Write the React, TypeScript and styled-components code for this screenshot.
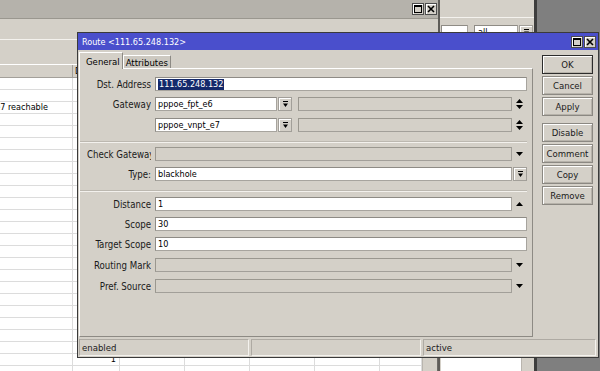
import React from "react";
import styled, { createGlobalStyle } from "styled-components";

const FONT = `"DejaVu Sans Condensed", "DejaVu Sans", sans-serif`;
const FACE = "#d4d0c8";

const GlobalStyle = createGlobalStyle`
  html, body { margin: 0; padding: 0; }
  body {
    background: #7f7f7f;
    font-family: ${FONT};
    font-stretch: condensed;
    font-size: 9px;
    color: #000;
  }
  #root { width: 600px; height: 371px; }
`;

const Desktop = styled.div`
  position: relative;
  width: 600px;
  height: 371px;
  overflow: hidden;
  background: #7f7f7f;
`;

/* ---------- background window ---------- */
const BgWindow = styled.div`
  position: absolute;
  left: 0;
  top: 0;
  width: 440px;
  height: 371px;
  box-sizing: border-box;
  border-right: 2px solid #5e5c58;
  background: ${FACE};
  display: flex;
  flex-direction: column;
`;

const BgTitleBar = styled.div`
  height: 19px;
  flex: none;
  box-sizing: border-box;
  background: #b5b2ab;
  border-bottom: 1px solid #9a978f;
  display: flex;
  justify-content: flex-end;
  align-items: center;
  gap: 1px;
  padding-right: 1px;
`;

const WinButton = styled.div`
  width: 12px;
  height: 12px;
  box-sizing: border-box;
  border: 1px solid #4d4d4d;
  background: ${FACE};
  box-shadow: inset 1px 1px 0 #fff;
  display: flex;
  align-items: center;
  justify-content: center;
`;

const ToolStrip = styled.div<{ $h: number; $line?: boolean }>`
  height: ${(p) => p.$h}px;
  flex: none;
  box-sizing: border-box;
  border-bottom: ${(p) => (p.$line ? "1px solid #f4f2ee" : "none")};
`;

const TableArea = styled.div`
  flex: 1;
  display: flex;
  min-height: 0;
`;

const Grid = styled.div`
  width: 422px;
  display: flex;
  flex-direction: column;
  overflow: hidden;
  background: #fff;
`;

const HeaderRow = styled.div`
  height: 14px;
  flex: none;
  box-sizing: border-box;
  display: flex;
  background: ${FACE};
  border-top: 1px solid #fff;
  border-bottom: 1px solid #a3a09a;
`;

const HeaderCell = styled.div<{ $w: number }>`
  width: ${(p) => p.$w}px;
  flex: none;
  box-sizing: border-box;
  border-right: 1px solid #a3a09a;
  padding-left: 2px;
  white-space: nowrap;
  overflow: hidden;
  line-height: 12px;
`;

const DataRow = styled.div`
  height: 12px;
  flex: none;
  box-sizing: border-box;
  display: flex;
  border-bottom: 1px solid #dcdcdc;
`;

const DataCell = styled.div<{ $w: number; $align?: "left" | "right" }>`
  width: ${(p) => p.$w}px;
  flex: none;
  box-sizing: border-box;
  border-right: 1px solid #dcdcdc;
  display: flex;
  align-items: center;
  justify-content: ${(p) => (p.$align === "right" ? "flex-end" : "flex-start")};
  padding: 0 3px 0 2px;
  white-space: nowrap;
  overflow: hidden;
  line-height: 11px;
`;

const FirstCell = styled(DataCell)`
  justify-content: flex-end;
  padding-right: 24px;
`;

const VScroll = styled.div`
  width: 16px;
  flex: none;
  box-sizing: border-box;
  background: ${FACE};
  border-left: 1px solid #b9b5ae;
  border-right: 1px solid #6c6a66;
`;

/* ---------- side window ---------- */
const SideWindow = styled.div`
  position: absolute;
  left: 440px;
  top: 0;
  width: 97px;
  height: 371px;
  box-sizing: border-box;
  border-right: 3px solid #3d3d3d;
  background: ${FACE};
  display: flex;
  flex-direction: column;
`;

const FilterBar = styled.div`
  display: flex;
  align-items: flex-start;
  padding: 7px 0 0 1px;
  height: 60px;
  flex: none;
  box-sizing: border-box;
  border-top: 1px solid #f4f2ee;
  margin-top: 17px;
  gap: 6px;
`;

const SmallInput = styled.div<{ $w: number }>`
  width: ${(p) => p.$w}px;
  height: 14px;
  box-sizing: border-box;
  background: #fff;
  border: 1px solid #a7a49e;
  border-top-color: #8e8b85;
  border-left-color: #8e8b85;
  padding-left: 3px;
  line-height: 12px;
  white-space: nowrap;
  overflow: hidden;
`;

const FilterCombo = styled.div`
  display: flex;
  gap: 1px;
`;

const SideList = styled.div`
  flex: 1;
  display: flex;
  margin-left: 1px;
`;

const SideListBody = styled.div`
  flex: 1;
  background: #fff;
`;

const SideScroll = styled.div`
  width: 13px;
  flex: none;
  background: ${FACE};
  box-sizing: border-box;
  border-left: 1px solid #b9b5ae;
`;

/* ---------- dialog ---------- */
const Dialog = styled.div`
  position: absolute;
  left: 77px;
  top: 32px;
  width: 522px;
  height: 326px;
  box-sizing: border-box;
  border: 1px solid #3a3a3a;
  background: ${FACE};
  display: flex;
  flex-direction: column;
`;

const DialogTitle = styled.div`
  height: 17px;
  flex: none;
  background: #4a4fcc;
  color: #fff;
  display: flex;
  align-items: center;
  justify-content: space-between;
  padding: 0 2px 0 4px;
  white-space: nowrap;
`;

const TitleButtons = styled.div`
  display: flex;
  gap: 1px;
`;

const DialogBody = styled.div`
  flex: 1;
  display: flex;
  align-items: flex-start;
  padding: 1px 5px 0 1px;
  gap: 9px;
  min-height: 0;
`;

const Main = styled.div`
  width: 454px;
  flex: none;
  display: flex;
  flex-direction: column;
`;

const Tabs = styled.div`
  height: 17px;
  display: flex;
  align-items: flex-end;
`;

const Tab = styled.div<{ $active?: boolean }>`
  height: ${(p) => (p.$active ? 17 : 13)}px;
  box-sizing: border-box;
  padding: ${(p) => (p.$active ? "0 2px 0 6px" : "0 2px 0 2px")};
  border-top: 1px solid #fff;
  border-left: 1px solid #fff;
  border-right: 1px solid #8d8a84;
  background: ${(p) => (p.$active ? FACE : "#cdc9c1")};
  display: flex;
  align-items: center;
  white-space: nowrap;
  font-size: 9.5px;
  position: relative;
  z-index: ${(p) => (p.$active ? 1 : 0)};
  margin-bottom: ${(p) => (p.$active ? -1 : 0)}px;
`;

const Panel = styled.div`
  height: 269px;
  box-sizing: border-box;
  border-top: 1px solid #fff;
  border-left: 1px solid #fff;
  border-right: 1px solid #8d8a84;
  border-bottom: 1px solid #8d8a84;
  padding-top: 8px;
  display: flex;
  flex-direction: column;
`;

const Row = styled.div<{ $mb?: number }>`
  height: 14px;
  flex: none;
  display: flex;
  align-items: center;
  padding: 0 5px 0 7px;
  margin-bottom: ${(p) => p.$mb ?? 6}px;
`;

const Label = styled.div`
  width: 64px;
  flex: none;
  margin-right: 4px;
  text-align: right;
  white-space: nowrap;
  overflow: hidden;
  font-size: 9.6px;
  color: #1a1a1a;
`;

const Field = styled.div<{ $disabled?: boolean; $w?: number }>`
  ${(p) => (p.$w ? `width: ${p.$w}px; flex: none;` : "flex: 1;")}
  height: 14px;
  box-sizing: border-box;
  background: ${(p) => (p.$disabled ? FACE : "#fff")};
  border: 1px solid ${(p) => (p.$disabled ? "#a29f99" : "#a7a49e")};
  border-top-color: ${(p) => (p.$disabled ? "#9a978f" : "#8e8b85")};
  border-left-color: ${(p) => (p.$disabled ? "#9a978f" : "#8e8b85")};
  padding-left: 2px;
  display: flex;
  align-items: center;
  white-space: nowrap;
  overflow: hidden;
`;

const Selected = styled.span`
  background: #14296b;
  color: #fff;
  padding: 0 1px;
  line-height: 11px;
`;

const IconSlot = styled.div<{ $end?: boolean }>`
  width: 15px;
  flex: none;
  height: 14px;
  display: flex;
  align-items: center;
  justify-content: ${(p) => (p.$end ? "flex-end" : "center")};
`;

const DropButton = styled.div<{ $ml?: number; $mr?: number }>`
  width: 14px;
  height: 14px;
  flex: none;
  box-sizing: border-box;
  margin-left: ${(p) => p.$ml ?? 0}px;
  margin-right: ${(p) => p.$mr ?? 0}px;
  border: 1px solid #a29f99;
  background: ${FACE};
  box-shadow: inset 1px 1px 0 #fff;
  display: flex;
  align-items: center;
  justify-content: center;
`;

const Separator = styled.div<{ $mb: number }>`
  height: 0;
  flex: none;
  border-top: 1px solid #bcb8b0;
  border-bottom: 1px solid #f3f1ed;
  margin: 3px 5px ${(p) => p.$mb}px 0;
`;

const ButtonCol = styled.div`
  width: 51px;
  flex: none;
  display: flex;
  flex-direction: column;
  gap: 2px;
  padding-top: 4px;
`;

const Btn = styled.div<{ $default?: boolean; $mt?: number }>`
  height: 19px;
  box-sizing: border-box;
  margin-top: ${(p) => p.$mt ?? 0}px;
  border: 1px solid ${(p) => (p.$default ? "#2c2c2c" : "#8b8882")};
  background: ${FACE};
  box-shadow: inset 1px 1px 0 #fff, inset -1px -1px 0 #b6b2aa;
  display: flex;
  align-items: center;
  justify-content: center;
  color: #1a1a1a;
  font-size: 9.5px;
  white-space: nowrap;
`;

const StatusBar = styled.div`
  height: 17px;
  flex: none;
  display: flex;
  gap: 2px;
  margin: 2px 2px 1px 1px;
`;

const StatusSeg = styled.div<{ $w?: number }>`
  ${(p) => (p.$w ? `width: ${p.$w}px; flex: none;` : "flex: 1;")}
  box-sizing: border-box;
  border: 1px solid;
  border-color: #aeaaa3 #f4f2ee #f4f2ee #aeaaa3;
  padding-left: 2px;
  display: flex;
  align-items: center;
  white-space: nowrap;
  font-size: 9.5px;
  color: #1a1a1a;
`;

/* ---------- glyphs ---------- */
const MaxGlyph = () => (
  <svg width="8" height="8" viewBox="0 0 8 8">
    <rect x="0.5" y="0.5" width="7" height="7" fill="none" stroke="#000" />
    <rect x="0" y="0" width="8" height="2" fill="#000" />
  </svg>
);

const CloseGlyph = () => (
  <svg width="8" height="8" viewBox="0 0 8 8">
    <path d="M1 1L7 7M7 1L1 7" stroke="#000" strokeWidth="1.6" />
  </svg>
);

const DropGlyph = () => (
  <svg width="7" height="7" viewBox="0 0 7 7">
    <rect x="1" y="0" width="5" height="1" fill="#000" />
    <path d="M1 2.5H6L3.5 6Z" fill="#000" />
  </svg>
);

const UpDownGlyph = () => (
  <svg width="7" height="10" viewBox="0 0 7 10">
    <path d="M0 4H7L3.5 0Z" fill="#000" />
    <path d="M0 6H7L3.5 10Z" fill="#000" />
  </svg>
);

const DownGlyph = () => (
  <svg width="7" height="4" viewBox="0 0 7 4">
    <path d="M0 0H7L3.5 4Z" fill="#000" />
  </svg>
);

const UpGlyph = () => (
  <svg width="7" height="4" viewBox="0 0 7 4">
    <path d="M0 4H7L3.5 0Z" fill="#000" />
  </svg>
);

const COLS = [73, 47, 65, 65, 65, 65, 42];
const ROW_COUNT = 25;

function BackgroundTable() {
  return (
    <TableArea>
      <Grid>
        <HeaderRow>
          {COLS.map((w, i) => (
            <HeaderCell key={i} $w={w}>
              {i === 1 ? "Dst. Address" : ""}
            </HeaderCell>
          ))}
        </HeaderRow>
        {Array.from({ length: ROW_COUNT }).map((_, r) => (
          <DataRow key={r}>
            {COLS.map((w, i) => {
              if (i === 0) {
                return (
                  <FirstCell key={i} $w={w}>
                    {r === 2 ? "pppoe_vnpt_e7 reachable" : ""}
                  </FirstCell>
                );
              }
              return (
                <DataCell key={i} $w={w} $align={i === 1 ? "right" : "left"}>
                  {r === 23 && i === 1 ? "1" : ""}
                </DataCell>
              );
            })}
          </DataRow>
        ))}
      </Grid>
      <VScroll />
    </TableArea>
  );
}

export default function App() {
  return (
    <>
      <GlobalStyle />
      <Desktop>
        <BgWindow>
          <BgTitleBar>
            <WinButton>
              <MaxGlyph />
            </WinButton>
            <WinButton>
              <CloseGlyph />
            </WinButton>
          </BgTitleBar>
          <ToolStrip $h={21} $line />
          <ToolStrip $h={24} />
          <BackgroundTable />
        </BgWindow>

        <SideWindow>
          <FilterBar>
            <SmallInput $w={27} />
            <FilterCombo>
              <SmallInput $w={44}>all</SmallInput>
              <DropButton>
                <DropGlyph />
              </DropButton>
            </FilterCombo>
          </FilterBar>
          <SideList>
            <SideListBody />
            <SideScroll />
          </SideList>
        </SideWindow>

        <Dialog>
          <DialogTitle>
            <span>Route &lt;111.65.248.132&gt;</span>
            <TitleButtons>
              <WinButton>
                <MaxGlyph />
              </WinButton>
              <WinButton>
                <CloseGlyph />
              </WinButton>
            </TitleButtons>
          </DialogTitle>

          <DialogBody>
            <Main>
              <Tabs>
                <Tab $active>General</Tab>
                <Tab>Attributes</Tab>
              </Tabs>
              <Panel>
                <Row>
                  <Label>Dst. Address</Label>
                  <Field>
                    <Selected>111.65.248.132</Selected>
                  </Field>
                </Row>
                <Row $mb={7}>
                  <Label>Gateway</Label>
                  <Field $w={122}>pppoe_fpt_e6</Field>
                  <DropButton $ml={1} $mr={6}>
                    <DropGlyph />
                  </DropButton>
                  <Field $disabled />
                  <IconSlot>
                    <UpDownGlyph />
                  </IconSlot>
                </Row>
                <Row>
                  <Label />
                  <Field $w={122}>pppoe_vnpt_e7</Field>
                  <DropButton $ml={1} $mr={6}>
                    <DropGlyph />
                  </DropButton>
                  <Field $disabled />
                  <IconSlot>
                    <UpDownGlyph />
                  </IconSlot>
                </Row>
                <Separator $mb={4} />
                <Row>
                  <Label>Check Gateway</Label>
                  <Field $disabled />
                  <IconSlot>
                    <DownGlyph />
                  </IconSlot>
                </Row>
                <Row>
                  <Label>Type:</Label>
                  <Field>blackhole</Field>
                  <IconSlot $end>
                    <DropButton>
                      <DropGlyph />
                    </DropButton>
                  </IconSlot>
                </Row>
                <Separator $mb={5} />
                <Row>
                  <Label>Distance</Label>
                  <Field>1</Field>
                  <IconSlot>
                    <UpGlyph />
                  </IconSlot>
                </Row>
                <Row>
                  <Label>Scope</Label>
                  <Field>30</Field>
                </Row>
                <Row $mb={7}>
                  <Label>Target Scope</Label>
                  <Field>10</Field>
                </Row>
                <Row $mb={7}>
                  <Label>Routing Mark</Label>
                  <Field $disabled />
                  <IconSlot>
                    <DownGlyph />
                  </IconSlot>
                </Row>
                <Row>
                  <Label>Pref. Source</Label>
                  <Field $disabled />
                  <IconSlot>
                    <DownGlyph />
                  </IconSlot>
                </Row>
              </Panel>
            </Main>

            <ButtonCol>
              <Btn $default>OK</Btn>
              <Btn>Cancel</Btn>
              <Btn>Apply</Btn>
              <Btn $mt={5}>Disable</Btn>
              <Btn>Comment</Btn>
              <Btn>Copy</Btn>
              <Btn>Remove</Btn>
            </ButtonCol>
          </DialogBody>

          <StatusBar>
            <StatusSeg $w={170}>enabled</StatusSeg>
            <StatusSeg $w={170} />
            <StatusSeg>active</StatusSeg>
          </StatusBar>
        </Dialog>
      </Desktop>
    </>
  );
}
